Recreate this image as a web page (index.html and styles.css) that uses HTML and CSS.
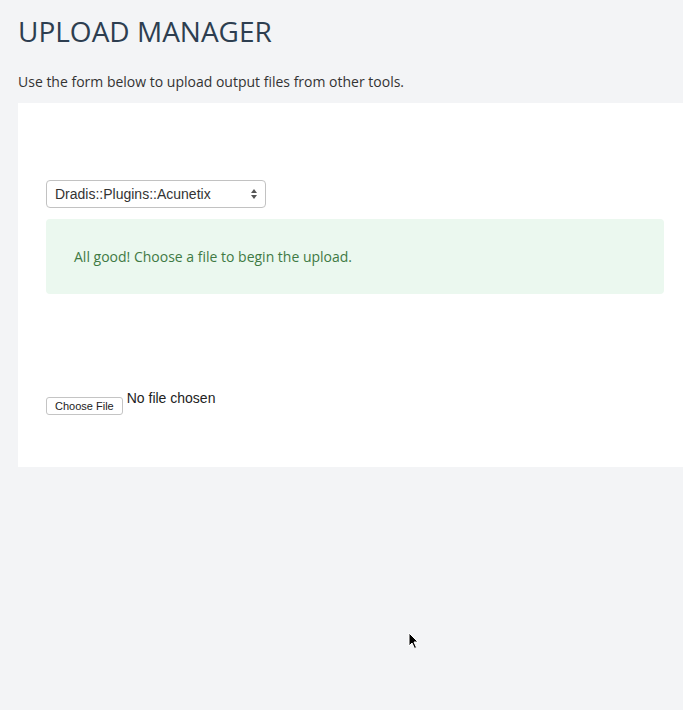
FILE: index.html
```html
<!DOCTYPE html>
<html lang="en">
<head>
<meta charset="utf-8">
<title>Upload Manager</title>
<link rel="stylesheet" href="styles.css">
</head>
<body>
<main class="page">
  <h1 class="title">UPLOAD MANAGER</h1>
  <p class="lead">Use the form below to upload output files from other tools.</p>
  <section class="card">
    <div class="select">
      <span class="select-label">Dradis::Plugins::Acunetix</span>
      <svg class="select-arrows" width="8" height="12" viewBox="0 0 8 12"><path d="M4 1 L7 5 H1 Z" fill="#555"/><path d="M4 11 L7 7 H1 Z" fill="#555"/></svg>
    </div>
    <div class="alert">All good! Choose a file to begin the upload.</div>
    <div class="file">
      <span class="file-btn">Choose File</span>
      <span class="file-status">No file chosen</span>
    </div>
  </section>
</main>
<svg class="cursor" width="12" height="18" viewBox="0 0 12 18"><path d="M1 1 L1 14 L4 11 L6.5 16.5 L8.5 15.5 L6 10 L10 10 Z" fill="#000" stroke="#fff" stroke-width="1"/></svg>
</body>
</html>
```
FILE: styles.css
```css
html, body {
  margin: 0;
  padding: 0;
}
body {
  background: #f3f4f6;
  font-family: "Open Sans", sans-serif;
  width: 683px;
  height: 710px;
  overflow: hidden;
  position: relative;
}
.page {
  padding-left: 18px;
}
.title {
  margin: 12px 0 0 0;
  font-size: 28px;
  line-height: 38px;
  font-weight: 400;
  color: #2d3e50;
}
.lead {
  margin: 22px 0 0 0;
  font-size: 14px;
  line-height: 20px;
  color: #333;
}
.card {
  margin-top: 11px;
  background: #fff;
  height: 364px;
  box-sizing: border-box;
  padding: 77px 20px 0 28px;
  display: flex;
  flex-direction: column;
  align-items: flex-start;
}
.select {
  width: 220px;
  height: 28px;
  box-sizing: border-box;
  border: 1px solid #c2c2c2;
  border-radius: 4px;
  display: flex;
  align-items: center;
  justify-content: space-between;
  padding: 0 7px 0 8px;
  font-family: "Liberation Sans", Arial, sans-serif;
  font-size: 14px;
  color: #333;
  background: #fff;
}
.select-arrows {
  display: block;
}
.alert {
  margin-top: 11px;
  width: 618px;
  height: 75px;
  box-sizing: border-box;
  background: #ebf8ef;
  border-radius: 4px;
  padding: 0 28px;
  display: flex;
  align-items: center;
  color: #3f7a44;
  font-size: 14px;
}
.file {
  margin-top: 96px;
  display: flex;
  align-items: flex-start;
  gap: 4px;
}
.file-btn {
  margin-top: 7px;
  box-sizing: border-box;
  height: 18px;
  padding: 0 8px;
  border: 1px solid #c4c4c4;
  border-radius: 3px;
  background: #fff;
  font-family: "Liberation Sans", Arial, sans-serif;
  font-size: 11px;
  line-height: 16px;
  color: #222;
}
.file-status {
  font-family: "Liberation Sans", Arial, sans-serif;
  font-size: 14px;
  line-height: 16px;
  color: #222;
}
.cursor {
  position: absolute;
  left: 408px;
  top: 632px;
}
```
